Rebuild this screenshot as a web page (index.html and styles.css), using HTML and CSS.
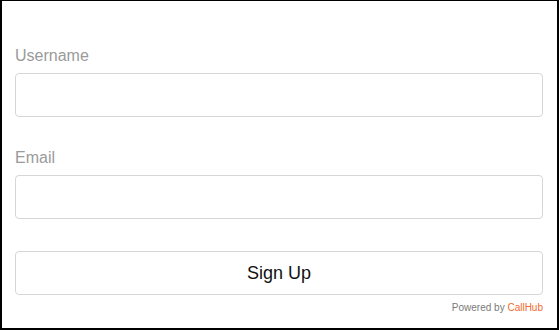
FILE: index.html
```html
<!DOCTYPE html>
<html>
<head>
<meta charset="utf-8">
<link rel="stylesheet" href="styles.css">
</head>
<body>
<div class="frame">
  <form class="form">
    <label class="label" for="username">Username</label>
    <input class="input" id="username" type="text">
    <label class="label label-email" for="email">Email</label>
    <input class="input" id="email" type="email">
    <button class="button" type="button">Sign Up</button>
    <div class="powered">Powered by <span class="brand">CallHub</span></div>
  </form>
</div>
</body>
</html>
```
FILE: styles.css
```css
html, body {
  margin: 0;
  padding: 0;
  background: #fff;
}
.frame {
  box-sizing: border-box;
  width: 559px;
  height: 330px;
  border-style: solid;
  border-color: #000;
  border-width: 1px 2px 2px 2px;
  padding: 45px 14px 0 13px;
  font-family: "Liberation Sans", Arial, sans-serif;
}
.form {
  display: flex;
  flex-direction: column;
}
.label {
  font-size: 16px;
  line-height: 20px;
  color: #9a9a9a;
  margin-bottom: 7px;
}
.label-email {
  margin-top: 31px;
}
.input {
  box-sizing: border-box;
  height: 44px;
  width: 100%;
  margin: 0;
  border: 1px solid #d6d6d6;
  border-radius: 4px;
  background: #fff;
  outline: none;
}
.button {
  box-sizing: border-box;
  height: 44px;
  width: 100%;
  margin: 32px 0 0 0;
  border: 1px solid #d6d6d6;
  border-radius: 4px;
  background: #fff;
  font-family: "Liberation Sans", Arial, sans-serif;
  font-size: 18px;
  color: #111;
  padding: 0;
}
.powered {
  text-align: right;
  font-size: 10px;
  line-height: 12px;
  margin-top: 7px;
  color: #7a7a7a;
}
.brand {
  color: #f26a2e;
}
```
